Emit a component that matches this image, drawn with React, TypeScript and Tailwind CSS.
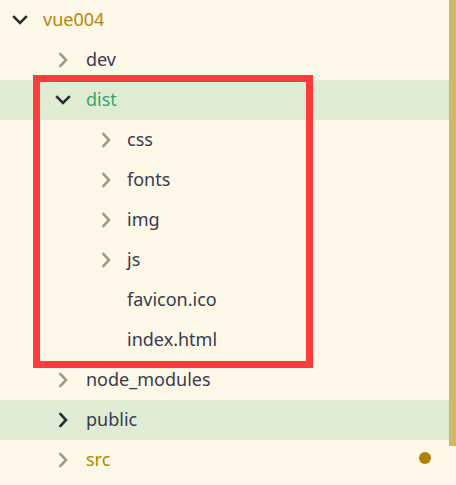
import React from 'react';

type Row = {
  name: string;
  level: number;
  kind: 'open' | 'closed' | 'file';
  tone: string;
  active?: boolean;
  darkIcon?: boolean;
};

const rows: Row[] = [
  { name: 'vue004', level: 0, kind: 'open', tone: 'text-[#b8860b]', darkIcon: true },
  { name: 'dev', level: 1, kind: 'closed', tone: 'text-[#3a3a4c]' },
  { name: 'dist', level: 1, kind: 'open', tone: 'text-[#3aa36a]', active: true, darkIcon: true },
  { name: 'css', level: 2, kind: 'closed', tone: 'text-[#3a3a4c]' },
  { name: 'fonts', level: 2, kind: 'closed', tone: 'text-[#3a3a4c]' },
  { name: 'img', level: 2, kind: 'closed', tone: 'text-[#3a3a4c]' },
  { name: 'js', level: 2, kind: 'closed', tone: 'text-[#3a3a4c]' },
  { name: 'favicon.ico', level: 2, kind: 'file', tone: 'text-[#3a3a4c]' },
  { name: 'index.html', level: 2, kind: 'file', tone: 'text-[#3a3a4c]' },
  { name: 'node_modules', level: 1, kind: 'closed', tone: 'text-[#3a3a4c]' },
  { name: 'public', level: 1, kind: 'closed', tone: 'text-[#3a3a4c]', active: true, darkIcon: true },
  { name: 'src', level: 1, kind: 'closed', tone: 'text-[#b08a00]' },
];

// chevron box left edge and gap to the label, per depth
const indent = ['pl-[12px] gap-[15px]', 'pl-[55px] gap-[15px]', 'pl-[98px] gap-[13px]'];

function Chevron({ kind, dark }: { kind: Row['kind']; dark?: boolean }) {
  const color = dark ? '#2c2c2c' : '#a19a82';
  if (kind === 'file') return <span className="w-[16px] shrink-0" />;
  if (kind === 'open') {
    return (
      <svg width="16" height="16" viewBox="0 0 16 16" className="shrink-0">
        <path d="M1.2 4.2 L8 11 L14.8 4.2" fill="none" stroke={color} strokeWidth="2.6" />
      </svg>
    );
  }
  return (
    <svg width="16" height="16" viewBox="0 0 16 16" className="shrink-0">
      <path d="M4.6 1.2 L11 8 L4.6 14.8" fill="none" stroke={color} strokeWidth="2.6" />
    </svg>
  );
}

export default function App() {
  return (
    <div className="relative w-[456px] h-[485px] overflow-hidden bg-[#fdf8e7] font-['Noto_Sans','Open_Sans',sans-serif] text-[18px]">
      <div className="flex flex-col">
        {rows.map((r) => (
          <div
            key={r.name}
            className={`h-[40px] flex items-center ${indent[r.level]} ${r.active ? 'bg-[#e0ebd3]' : ''}`}
          >
            <Chevron kind={r.kind} dark={r.darkIcon} />
            <span className={`${r.tone} leading-none -mt-[2px]`}>{r.name}</span>
          </div>
        ))}
      </div>

      {/* scrollbar */}
      <div className="absolute right-0 top-0 w-[7px] h-[446px] bg-[#cfb76c]" />

      {/* modified dot */}
      <div className="absolute left-[419px] top-[452px] w-[12px] h-[12px] rounded-full bg-[#b08000]" />

      {/* highlight box */}
      <div className="absolute left-[33px] top-[75px] w-[280px] h-[293px] border-[7px] border-[#fc3b3b]" />
    </div>
  );
}
